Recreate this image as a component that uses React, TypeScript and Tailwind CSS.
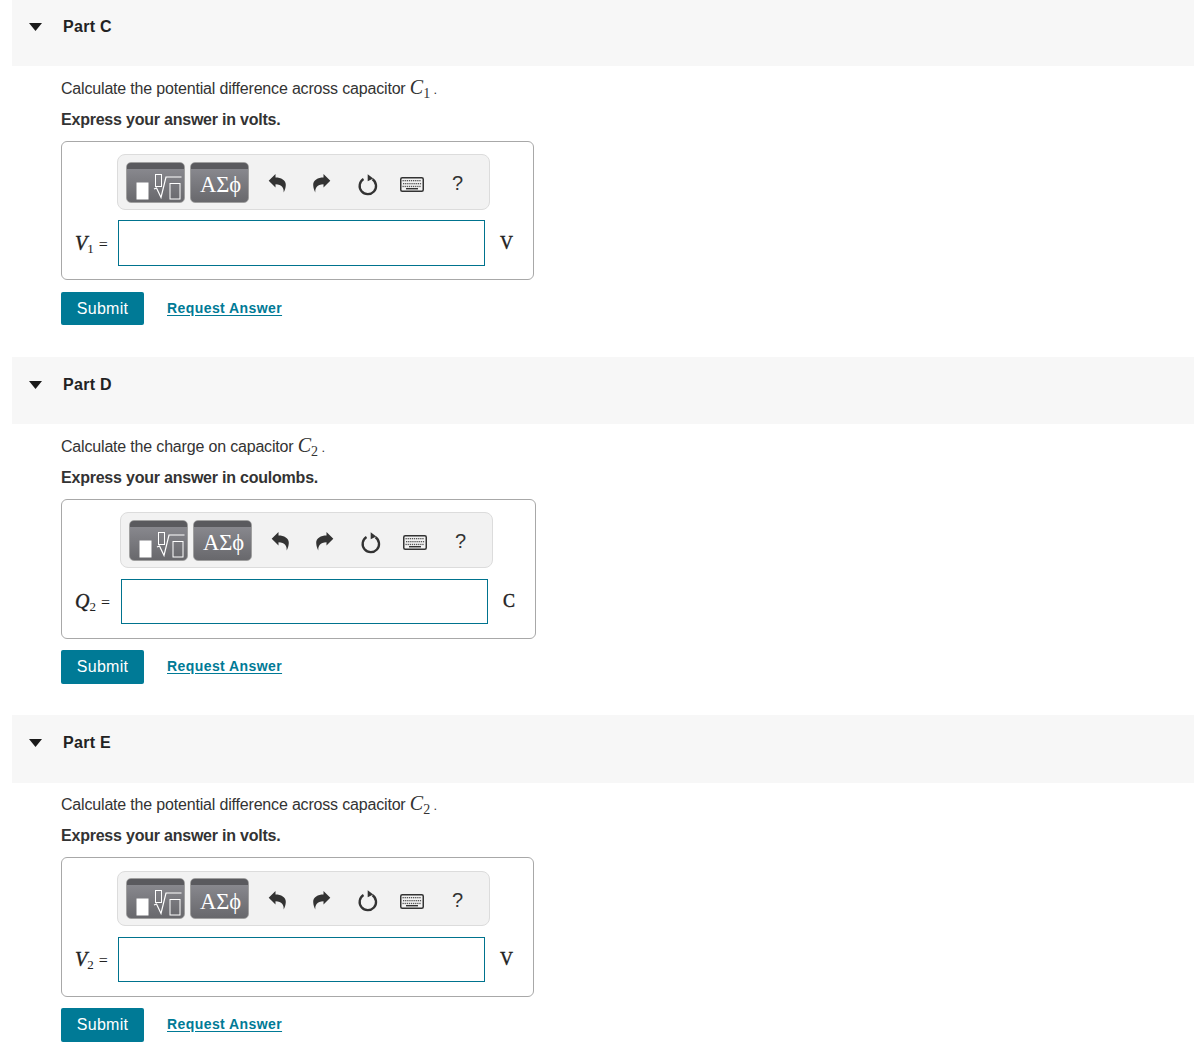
import React from 'react';

interface PartProps {
  title: string;
  prompt: string;
  symbol: string;
  sub: string;
  hint: string;
  label: string;
  unit: string;
  wide?: boolean;
  headerClass: string;
  promptClass: string;
  boxClass: string;
  toolbarClass: string;
  inputClass: string;
  submitClass: string;
  sectionClass: string;
}

const Serif = "font-['Liberation_Serif',serif]";

function TemplateIcon() {
  return (
    <svg width="59" height="41" viewBox="0 0 59 41" className="absolute inset-0">
      <rect x="9.5" y="19.5" width="12" height="17" fill="#fff" />
      <rect x="28.5" y="11.5" width="6" height="12" fill="none" stroke="#fff" strokeWidth="1" />
      <path d="M27 26 L29.5 25 L34 34.5 L39 14 H54.5" fill="none" stroke="#fff" strokeWidth="1.2" />
      <rect x="43" y="20.5" width="10" height="15.5" fill="none" stroke="#fff" strokeWidth="1" />
    </svg>
  );
}

function ReplyIcon({ flip }: { flip?: boolean }) {
  return (
    <svg width="18" height="19" viewBox="0 0 18 19" className={flip ? '-scale-x-100' : ''}>
      <path d="M0.7 6.7 L7.5 0 V3.4 C13 3.4 18 6 17.8 11 C17.7 14 16.6 16.5 15.7 18.5 C16 14 14 10.2 7.5 10.2 V13.5 Z" fill="#333" />
    </svg>
  );
}

function RedoCircle() {
  return (
    <svg width="22" height="24" viewBox="0 0 22 24">
      <path d="M6.5 7 A8.2 8.2 0 1 0 15.5 7.2" fill="none" stroke="#333" strokeWidth="2.3" />
      <path d="M10.7 2.3 L16.3 6.6 L10.7 9.3 Z" fill="#333" />
    </svg>
  );
}

function KeyboardIcon() {
  const keys: React.ReactNode[] = [];
  for (let i = 0; i < 9; i++) {
    keys.push(<rect key={`a${i}`} x={2.5 + i * 2.1} y="3" width="1.3" height="1.3" fill="#555" />);
    keys.push(<rect key={`b${i}`} x={3 + i * 2.1} y="6" width="1.3" height="1.3" fill="#555" />);
    keys.push(<rect key={`c${i}`} x={2.5 + i * 2.1} y="8.8" width="1.3" height="1.3" fill="#555" />);
  }
  return (
    <svg width="24" height="15" viewBox="0 0 24 15">
      <rect x="0.75" y="0.75" width="22.5" height="13.5" rx="1.5" fill="#f2f2f2" stroke="#333" strokeWidth="1.5" />
      {keys}
      <rect x="6" y="11" width="12" height="1.4" fill="#333" />
    </svg>
  );
}

function Part({
  title,
  prompt,
  symbol,
  sub,
  hint,
  label,
  unit,
  wide,
  headerClass,
  promptClass,
  boxClass,
  toolbarClass,
  inputClass,
  submitClass,
  sectionClass,
}: PartProps) {
  return (
    <section className={sectionClass}>
      <div className={`flex bg-[#f7f7f7] pl-[17px] ${headerClass}`}>
        <svg width="13" height="8" viewBox="0 0 13 8" className="mt-[7px] shrink-0">
          <path d="M0 0 H13 L6.5 8 Z" fill="#1a1a1a" />
        </svg>
        <h2 className="ml-[21px] text-[16px] leading-[22px] font-bold tracking-[0.3px] text-[#222]">{title}</h2>
      </div>

      <div className="ml-[49px]">
        <p className={`h-[24px] text-[16px] leading-[24px] tracking-[-0.18px] text-[#333] ${promptClass}`}>
          {prompt}{' '}
          <span className={`${Serif} italic text-[20px] tracking-normal`}>{symbol}</span>
          <sub className={`${Serif} text-[14px] tracking-normal`}>{sub}</sub>
          <span className="text-[13px]"> .</span>
        </p>
        <p className="mt-[9px] h-[24px] text-[16px] leading-[24px] font-bold tracking-[-0.22px] text-[#333]">{hint}</p>

        <div className={`mt-[9px] rounded-[6px] border border-[#a8a8a8] ${boxClass}`}>
          <div className={`flex items-center rounded-[8px] border border-[#dcdcdc] bg-[#f2f2f2] pl-[8px] ${toolbarClass}`}>
            <div className="relative h-[41px] w-[59px] rounded-[5px] border border-[#a0a0a0] bg-gradient-to-b from-[#8e8e94] to-[#68686c]">
              <div className="absolute inset-x-0 top-0 h-[6px] rounded-t-[4px] bg-[#5a5a5e]" />
              <TemplateIcon />
            </div>
            <div className="relative ml-[5px] flex h-[41px] w-[59px] items-center justify-center rounded-[5px] border border-[#a0a0a0] bg-gradient-to-b from-[#8e8e94] to-[#68686c]">
              <div className="absolute inset-x-0 top-0 h-[6px] rounded-t-[4px] bg-[#5a5a5e]" />
              <span className={`${Serif} mt-[7px] ml-[2px] text-[22.5px] leading-none text-white`}>ΑΣϕ</span>
            </div>
            <div className="mt-[3px] ml-[19px]"><ReplyIcon /></div>
            <div className="mt-[3px] ml-[27px]"><ReplyIcon flip /></div>
            <div className="mt-[3px] ml-[26px]"><RedoCircle /></div>
            <div className="mt-[5px] ml-[21px]"><KeyboardIcon /></div>
            <span className="mt-[2px] ml-[28px] text-[20px] text-[#333]">?</span>
          </div>

          <div className="flex items-center pl-[13px]">
            <span className={`${Serif} mt-[10px] flex ${wide ? 'w-[46px]' : 'w-[43px]'} items-baseline text-[#222]`}>
              <i className="text-[20px] font-normal [-webkit-text-stroke:0.4px_#222]">{label}</i>
              <sub className="text-[13px]">{sub}</sub>
              <span className="ml-[5px] text-[16px]">=</span>
            </span>
            <div className={`w-[367px] border border-[#00738e] bg-white ${inputClass}`} />
            <span className={`${Serif} mt-[10px] ml-[15px] text-[18px] text-[#222] [-webkit-text-stroke:0.4px_#222]`}>{unit}</span>
          </div>
        </div>

        <div className={`flex items-start ${submitClass}`}>
          <button className="h-full w-[83px] rounded-[2px] bg-[#007a96] text-[16px] tracking-[0.25px] text-white">Submit</button>
          <a className="ml-[23px] text-[14px] leading-[33px] font-bold tracking-[0.42px] text-[#007a96] underline underline-offset-2">
            Request Answer
          </a>
        </div>
      </div>
    </section>
  );
}

export default function App() {
  return (
    <div className="min-h-[1064px] bg-white pl-[12px] font-['Liberation_Sans',sans-serif]">
      <Part
        sectionClass="h-[357px]"
        title="Part C"
        prompt="Calculate the potential difference across capacitor"
        symbol="C"
        sub="1"
        hint="Express your answer in volts."
        label="V"
        unit="V"
        headerClass="h-[66px] pt-[16px]"
        promptClass="mt-[9px]"
        boxClass="w-[473px] h-[139px] pt-[12px]"
        toolbarClass="ml-[55px] w-[373px] h-[56px]"
        inputClass="h-[46px] mt-[10px]"
        submitClass="mt-[12px] h-[33px]"
      />
      <Part
        sectionClass="h-[358px]"
        wide
        title="Part D"
        prompt="Calculate the charge on capacitor"
        symbol="C"
        sub="2"
        hint="Express your answer in coulombs."
        label="Q"
        unit="C"
        headerClass="h-[67px] pt-[17px]"
        promptClass="mt-[9px]"
        boxClass="w-[475px] h-[140px] pt-[12px]"
        toolbarClass="ml-[58px] w-[373px] h-[56px]"
        inputClass="h-[45px] mt-[11px]"
        submitClass="mt-[11px] h-[34px]"
      />
      <Part
        sectionClass=""
        title="Part E"
        prompt="Calculate the potential difference across capacitor"
        symbol="C"
        sub="2"
        hint="Express your answer in volts."
        label="V"
        unit="V"
        headerClass="h-[68px] pt-[17px]"
        promptClass="mt-[8px]"
        boxClass="w-[473px] h-[140px] pt-[13px]"
        toolbarClass="ml-[55px] w-[373px] h-[55px]"
        inputClass="h-[45px] mt-[11px]"
        submitClass="mt-[11px] h-[34px]"
      />
    </div>
  );
}
